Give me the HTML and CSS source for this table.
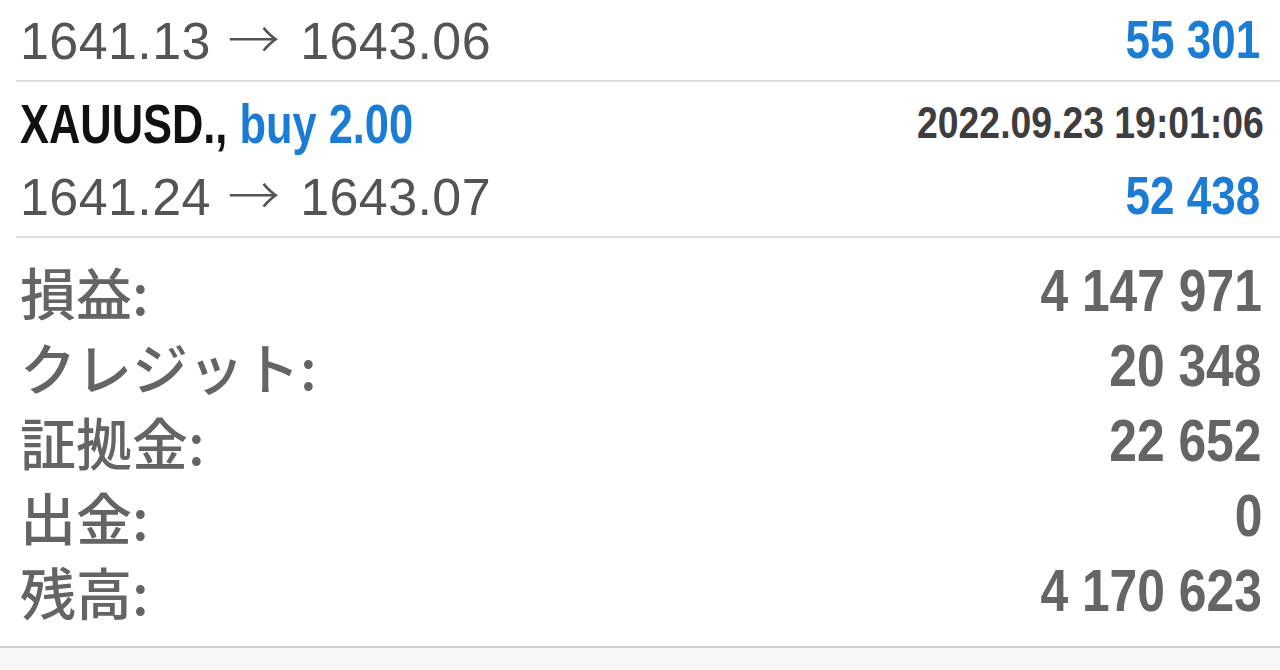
FILE: index.html
```html
<!DOCTYPE html>
<html lang="ja">
<head>
<meta charset="utf-8">
<title>Trade history</title>
<link rel="stylesheet" href="styles.css">
</head>
<body>
<div class="screen">
  <div class="trade trade-partial">
    <div class="line">
      <span class="prices">1641.13<span class="arrow">→</span>1643.06</span>
      <span class="profit"><span class="cond">55 301</span></span>
    </div>
  </div>
  <div class="trade">
    <div class="line">
      <span class="title"><span class="cond-left"><span class="sym">XAUUSD.,</span> <span class="type">buy 2.00</span></span></span>
      <span class="date"><span class="cond">2022.09.23 19:01:06</span></span>
    </div>
    <div class="line">
      <span class="prices">1641.24<span class="arrow">→</span>1643.07</span>
      <span class="profit"><span class="cond">52 438</span></span>
    </div>
  </div>
  <div class="summary">
    <div class="srow"><span class="label">損益:</span><span class="value"><span class="cond">4 147 971</span></span></div>
    <div class="srow"><span class="label">クレジット:</span><span class="value"><span class="cond">20 348</span></span></div>
    <div class="srow"><span class="label">証拠金:</span><span class="value"><span class="cond">22 652</span></span></div>
    <div class="srow"><span class="label">出金:</span><span class="value"><span class="cond">0</span></span></div>
    <div class="srow"><span class="label">残高:</span><span class="value"><span class="cond">4 170 623</span></span></div>
  </div>
  <div class="toolbar"></div>
</div>
</body>
</html>
```
FILE: styles.css
```css
html, body {
  margin: 0;
  padding: 0;
  background: #ffffff;
}
body {
  font-family: "Liberation Sans", Arial, "Noto Sans CJK JP", sans-serif;
  overflow: hidden;
}
.screen {
  width: 1280px;
  height: 670px;
  display: flex;
  flex-direction: column;
  overflow: hidden;
}
.trade {
  margin-left: 16px;
  padding: 5px 20px 5px 4px;
  border-bottom: 2px solid #dedede;
}
.trade-partial {
  padding-top: 3px;
}
.line {
  height: 72px;
  display: flex;
  align-items: center;
  justify-content: space-between;
  white-space: nowrap;
}
.prices {
  font-size: 52px;
  line-height: 60px;
  color: #545458;
  letter-spacing: 0.4px;
  display: flex;
  align-items: baseline;
}
.arrow {
  font-family: "Noto Sans CJK JP", "DejaVu Sans", sans-serif;
  font-weight: 300;
  font-size: 52px;
  line-height: 60px;
  margin: 0 20px 0 17px;
}
.cond {
  display: inline-block;
  transform: scaleX(0.83);
  transform-origin: right center;
}
.cond-left {
  display: inline-block;
  transform: scaleX(0.775);
  transform-origin: left center;
}
.profit {
  font-size: 53px;
  font-weight: 700;
  color: #1b7cd6;
}
.title {
  font-size: 56px;
  font-weight: 700;
}
.sym {
  color: #111111;
}
.type {
  color: #1b7cd6;
}
.date {
  font-size: 45px;
  font-weight: 700;
  color: #3d3d40;
  margin-right: -4px;
}
.summary {
  padding: 15px 18px 18px 20px;
  display: flex;
  flex-direction: column;
}
.srow {
  height: 75px;
  display: flex;
  align-items: center;
  justify-content: space-between;
  white-space: nowrap;
}
.label {
  font-family: "Noto Sans CJK JP", sans-serif;
  font-size: 56px;
  font-weight: 500;
  color: #646464;
}
.value {
  font-size: 60px;
  font-weight: 700;
  color: #656565;
}
.toolbar {
  flex: 1;
  background: #f7f7f8;
  border-top: 2px solid #cfcfcf;
}
```
